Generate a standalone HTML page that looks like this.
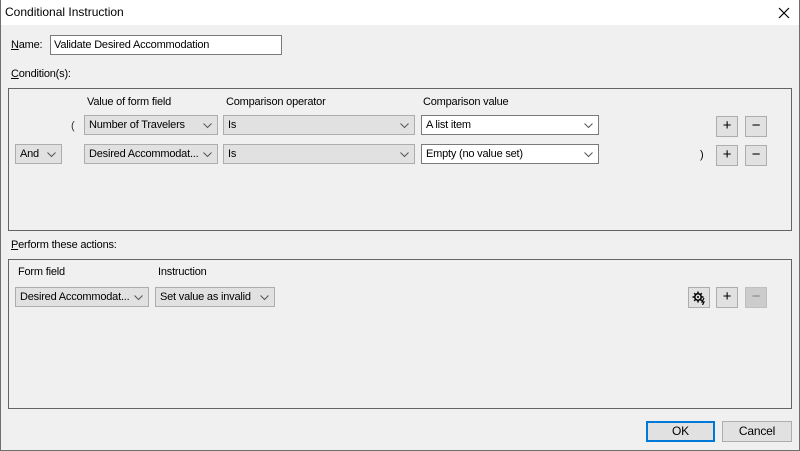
<!DOCTYPE html>
<html><head><meta charset="utf-8"><style>
*{margin:0;padding:0;box-sizing:border-box}
body{width:800px;height:451px;overflow:hidden;background:#f0f0f0;font-family:"Liberation Sans",sans-serif;font-size:11px;letter-spacing:-0.2px;color:#000;position:relative}
.a{position:absolute;white-space:nowrap}
.win{position:absolute;left:0;top:0;width:800px;height:451px;border:1px solid #6e6e6e;border-top:none}
.title{position:absolute;left:0;top:0;width:799px;height:25px;background:#fff}
.panel{position:absolute;border:1px solid #646464}
.cb{position:absolute;height:20px;background:#e1e1e1;border:1px solid #adadad;padding:3px 0 0 4px;white-space:nowrap;overflow:hidden}
.cb.w{background:#fff;border-color:#7a7a7a}
.cb svg{position:absolute;right:5px;top:7px}
.btn{position:absolute;width:22px;height:21px;background:#e1e1e1;border:1px solid #adadad;text-align:center;font-size:15px;line-height:18px}
.btn.d{background:#cccccc;border-color:#bfbfbf;color:#838383}
.pb{position:absolute;height:21px;background:#e1e1e1;border:1px solid #adadad;text-align:center;line-height:19px;font-size:12px}
u{text-decoration:underline}
</style></head><body>
<div class="title"></div>
<div class="a" style="left:5px;top:5px;font-size:12px;letter-spacing:0">Conditional Instruction</div>
<svg class="a" style="left:778px;top:7px" width="12" height="12"><path d="M1 1L11 11M11 1L1 11" stroke="#000" stroke-width="1.2"/></svg>
<div class="win"></div>

<div class="a" style="left:11px;top:39px"><u>N</u>ame:</div>
<div class="a" style="left:50px;top:35px;width:232px;height:20px;background:#fff;border:1px solid #7a7a7a;padding:3px 0 0 3px">Validate Desired Accommodation</div>
<div class="a" style="left:11px;top:68px"><u>C</u>ondition(s):</div>

<div class="panel" style="left:8px;top:88px;width:784px;height:143px"></div>
<div class="a" style="left:87px;top:96px">Value of form field</div>
<div class="a" style="left:226px;top:96px">Comparison operator</div>
<div class="a" style="left:423px;top:96px">Comparison value</div>

<div class="a" style="left:71px;top:120px;color:#333">(</div>
<div class="cb" style="left:84px;top:115px;width:134px">Number of Travelers<svg width="9" height="6"><path d="M0.5 0.5L4.5 4.5L8.5 0.5" fill="none" stroke="#555"/></svg></div>
<div class="cb" style="left:223px;top:115px;width:192px">Is<svg width="9" height="6"><path d="M0.5 0.5L4.5 4.5L8.5 0.5" fill="none" stroke="#555"/></svg></div>
<div class="cb w" style="left:421px;top:115px;width:178px">A list item<svg width="9" height="6"><path d="M0.5 0.5L4.5 4.5L8.5 0.5" fill="none" stroke="#555"/></svg></div>
<div class="btn" style="left:716px;top:116px">+</div>
<div class="btn" style="left:745px;top:116px">−</div>

<div class="cb" style="left:15px;top:144px;width:47px">And<svg width="9" height="6"><path d="M0.5 0.5L4.5 4.5L8.5 0.5" fill="none" stroke="#555"/></svg></div>
<div class="cb" style="left:84px;top:144px;width:134px">Desired Accommodat...<svg width="9" height="6"><path d="M0.5 0.5L4.5 4.5L8.5 0.5" fill="none" stroke="#555"/></svg></div>
<div class="cb" style="left:223px;top:144px;width:192px">Is<svg width="9" height="6"><path d="M0.5 0.5L4.5 4.5L8.5 0.5" fill="none" stroke="#555"/></svg></div>
<div class="cb w" style="left:421px;top:144px;width:178px">Empty (no value set)<svg width="9" height="6"><path d="M0.5 0.5L4.5 4.5L8.5 0.5" fill="none" stroke="#555"/></svg></div>
<div class="a" style="left:700px;top:149px">)</div>
<div class="btn" style="left:716px;top:145px">+</div>
<div class="btn" style="left:745px;top:145px">−</div>

<div class="a" style="left:11px;top:239px"><u>P</u>erform these actions:</div>
<div class="panel" style="left:8px;top:259px;width:784px;height:150px"></div>
<div class="a" style="left:18px;top:266px">Form field</div>
<div class="a" style="left:158px;top:266px">Instruction</div>
<div class="cb" style="left:15px;top:287px;width:134px">Desired Accommodat...<svg width="9" height="6"><path d="M0.5 0.5L4.5 4.5L8.5 0.5" fill="none" stroke="#555"/></svg></div>
<div class="cb" style="left:155px;top:287px;width:120px">Set value as invalid<svg width="9" height="6"><path d="M0.5 0.5L4.5 4.5L8.5 0.5" fill="none" stroke="#555"/></svg></div>
<div class="btn" style="left:688px;top:287px"><svg width="14" height="14" style="margin-top:3px"><g fill="none" stroke="#000" stroke-width="1.5"><circle cx="6" cy="6" r="3.2"/><path d="M6 0.5V2.5M6 9.5V11.5M0.5 6H2.5M9.5 6H11.5M2.2 2.2L3.6 3.6M8.4 8.4L9.8 9.8M2.2 9.8L3.6 8.4M9.8 2.2L8.4 3.6"/></g><circle cx="6" cy="6" r="1" fill="#000"/><path d="M12 7L10 11H12L10.5 14" stroke="#000" fill="none" stroke-width="1.2"/></svg></div>
<div class="btn" style="left:716px;top:287px">+</div>
<div class="btn d" style="left:745px;top:287px">−</div>

<div class="pb" style="left:646px;top:421px;width:69px;border:2px solid #0078d7;line-height:17px">OK</div>
<div class="pb" style="left:722px;top:421px;width:70px">Cancel</div>
</body></html>
